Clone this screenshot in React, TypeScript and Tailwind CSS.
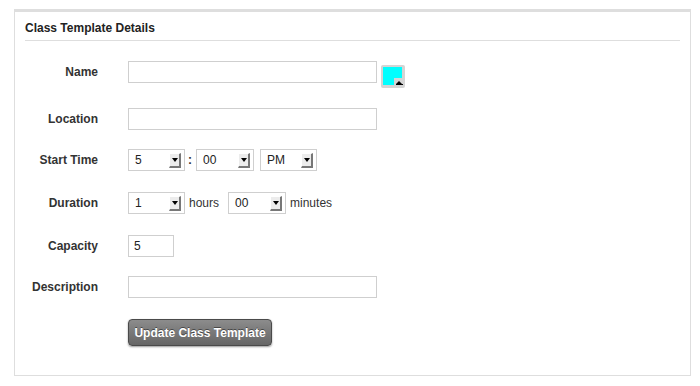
import type { ReactNode } from "react"

const font = { fontFamily: '"Liberation Sans", Arial, Helvetica, sans-serif' }

function Label({ children }: { children: ReactNode }) {
  return (
    <div className="w-[113px] shrink-0 pr-[30px] text-right text-[12px] font-bold text-[#333]">
      {children}
    </div>
  )
}

function Select({ value, width }: { value: string; width: string }) {
  return (
    <div
      className={`${width} flex h-[22px] items-center justify-between border border-[#cfcfcf] bg-white pl-[6px] pr-[3px] text-[12px] text-[#222]`}
    >
      <span>{value}</span>
      <div className="flex h-[15px] w-[12px] items-center justify-center border-t border-l border-b-2 border-r-2 border-t-white border-l-white border-b-[#777] border-r-[#777] bg-[#ececec]">
        <div className="h-0 w-0 border-l-[3px] border-r-[3px] border-t-[4px] border-l-transparent border-r-transparent border-t-black" />
      </div>
    </div>
  )
}

function TextBox({ width, value }: { width: string; value?: string }) {
  return (
    <div
      className={`${width} flex h-[22px] items-center border border-[#cfcfcf] bg-white px-[5px] text-[12px] text-[#222]`}
    >
      {value}
    </div>
  )
}

export default function App() {
  return (
    <div className="h-[386px] w-[700px] bg-white pl-[14px] pt-[9px]" style={font}>
      <div className="h-[367px] w-[677px] border border-t-[3px] border-[#dedede]">
        <div className="mx-[10px] border-b border-[#dedede] pb-[3px] pt-[7px] text-[12px] font-bold text-[#222]">
          Class Template Details
        </div>

        <div className="flex flex-col">
          <div className="mt-[20px] flex h-[27px] items-start">
            <div className="flex h-[22px] items-center">
              <Label>Name</Label>
            </div>
            <TextBox width="w-[249px]" />
            <div className="relative ml-[4px] mt-[4px] h-[23px] w-[24px] rounded-[2px] bg-[#d4d4d4]">
              <div className="absolute left-[2px] top-[2px] h-[18px] w-[19px] bg-[#00ffff]" />
              <div className="absolute left-[13px] top-[13px] flex h-[9px] w-[10px] flex-col items-center justify-end bg-[#d4d4d4] pb-[2px]">
                <div className="h-0 w-0 border-l-[3px] border-r-[3px] border-b-[3px] border-l-transparent border-r-transparent border-b-black" />
                <div className="h-[1px] w-[7px] bg-black" />
              </div>
            </div>
          </div>

          <div className="mt-[20px] flex h-[22px] items-center">
            <Label>Location</Label>
            <TextBox width="w-[249px]" />
          </div>

          <div className="mt-[19px] flex h-[22px] items-center">
            <Label>Start Time</Label>
            <Select value="5" width="w-[57px]" />
            <span className="ml-[3px] mr-[4px] text-[12px] font-bold text-[#333]">:</span>
            <Select value="00" width="w-[58px]" />
            <div className="w-[6px]" />
            <Select value="PM" width="w-[57px]" />
          </div>

          <div className="mt-[21px] flex h-[22px] items-center">
            <Label>Duration</Label>
            <Select value="1" width="w-[57px]" />
            <span className="ml-[4px] mr-[9px] text-[12px] text-[#333]">hours</span>
            <Select value="00" width="w-[58px]" />
            <span className="ml-[4px] text-[12px] text-[#333]">minutes</span>
          </div>

          <div className="mt-[21px] flex h-[21px] items-center">
            <Label>Capacity</Label>
            <TextBox width="w-[46px]" value="5" />
          </div>

          <div className="mt-[20px] flex h-[22px] items-center">
            <Label>Description</Label>
            <TextBox width="w-[249px]" />
          </div>

          <div className="mt-[21px] flex">
            <div className="w-[113px] shrink-0" />
            <button className="h-[27px] w-[144px] rounded-[4px] border border-[#4a4a4a] bg-gradient-to-b from-[#8c8c8c] to-[#666] text-[12px] font-bold text-white shadow-[0_1px_2px_rgba(0,0,0,0.4)] [text-shadow:0_-1px_0_rgba(0,0,0,0.45)]">
              Update Class Template
            </button>
          </div>
        </div>
      </div>
    </div>
  )
}
